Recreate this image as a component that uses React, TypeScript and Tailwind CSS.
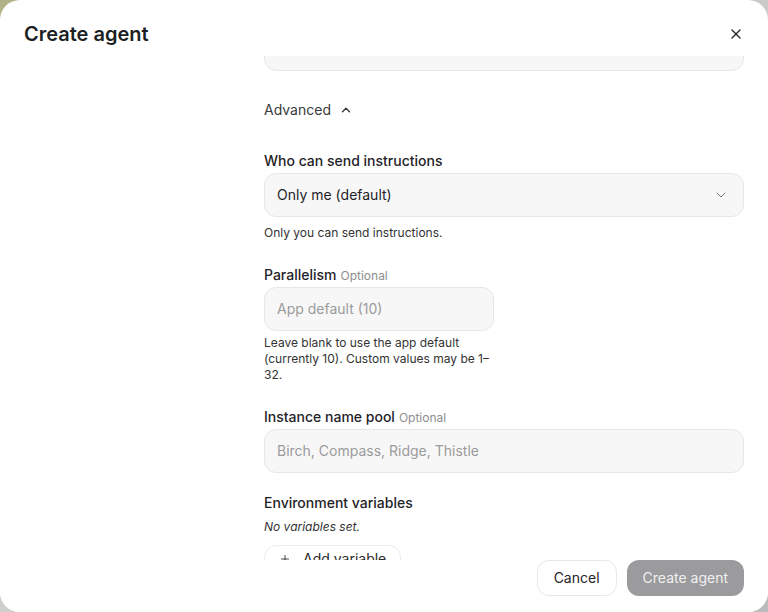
import { ChevronDown, ChevronUp, Plus, X } from 'lucide-react'

const Label = ({ text, optional }: { text: string; optional?: boolean }) => (
	<div className="h-5 text-sm leading-5 font-medium text-[#1f2328]">
		{text}
		{optional && <span className="ml-1 text-xs font-normal text-[#8e8e8e]">Optional</span>}
	</div>
)

const Field = ({ placeholder, className = '' }: { placeholder: string; className?: string }) => (
	<div
		className={`h-11 mt-0.5 flex items-center px-3 rounded-xl bg-[#f7f7f7] border border-[#e7e7e7] text-sm text-[#9b9b9b] ${className}`}
	>
		{placeholder}
	</div>
)

const App = () => {
	return (
		<div
			className="h-[612px] w-full bg-[linear-gradient(135deg,#b2b288_0%,#d2d2cc_35%,#c9c9c9_60%,#b9bdbd_100%)]"
			style={{ fontFamily: 'Inter, "Noto Sans", sans-serif' }}
		>
			<div className="h-full bg-white rounded-[20px] flex flex-col overflow-hidden">
				<div className="h-14 shrink-0 flex items-start justify-between px-6 pt-5">
					<h1 className="text-xl leading-7 font-semibold text-[#1c1f23]">Create agent</h1>
					<button className="mt-1.5 text-[#2a2a2a]">
						<X size={16} strokeWidth={2} />
					</button>
				</div>

				<div className="flex-1 overflow-hidden grid grid-cols-[240px_1fr] px-6">
					<div />
					<div className="flex flex-col">
						<div className="h-11 -mt-[29px] rounded-xl bg-[#f7f7f7] border border-[#e7e7e7]" />

						<button className="mt-[29px] h-5 flex items-center gap-2 text-sm leading-5 text-[#3a3a3a]">
							Advanced
							<ChevronUp size={14} strokeWidth={2.25} className="text-[#333]" />
						</button>

						<div className="mt-[31px]">
							<Label text="Who can send instructions" />
							<div className="h-11 mt-0.5 flex items-center justify-between pl-3 pr-3.5 rounded-xl bg-[#f7f7f7] border border-[#e7e7e7] text-sm text-[#1f2328]">
								Only me (default)
								<ChevronDown size={16} strokeWidth={1.5} className="text-[#7a7a7a]" />
							</div>
							<p className="mt-2 text-xs leading-4 text-[#333]">Only you can send instructions.</p>
						</div>

						<div className="mt-6">
							<Label text="Parallelism" optional />
							<Field placeholder="App default (10)" className="w-[230px]" />
							<p className="mt-1 w-[230px] text-xs leading-4 text-[#333]">
								Leave blank to use the app default (currently 10). Custom values may be 1–32.
							</p>
						</div>

						<div className="mt-6">
							<Label text="Instance name pool" optional />
							<Field placeholder="Birch, Compass, Ridge, Thistle" />
						</div>

						<div className="mt-5">
							<Label text="Environment variables" />
							<p className="mt-1.5 text-xs leading-4 italic text-[#333]">No variables set.</p>
							<button className="mt-2.5 h-7 self-start flex items-center gap-3 px-3.5 rounded-xl border border-[#ececec] text-sm text-[#2a2a2a]">
								<Plus size={12} strokeWidth={1.75} />
								Add variable
							</button>
						</div>
					</div>
				</div>

				<div className="shrink-0 flex justify-end gap-2.5 px-6 pb-4 bg-white">
					<button className="h-9 px-4 rounded-xl border border-[#e8e8e8] bg-white text-sm text-[#1f2328]">
						Cancel
					</button>
					<button className="h-9 px-4 rounded-xl bg-[#9b9b9d] text-sm text-[#f0f0f0]">Create agent</button>
				</div>
			</div>
		</div>
	)
}

export default App
